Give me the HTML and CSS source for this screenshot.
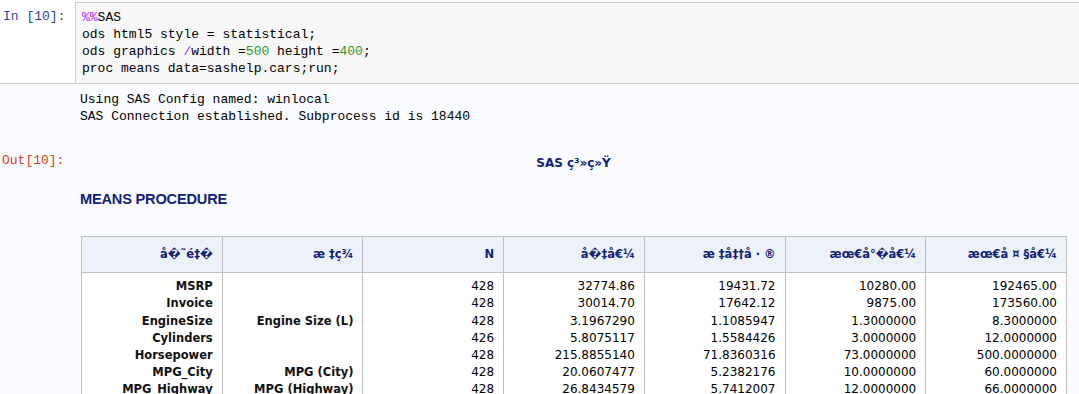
FILE: index.html
```html
<!DOCTYPE html>
<html lang="zh">
<head>
    <meta charset="UTF-8">
    <title>SAS notebook</title>
    <link rel="stylesheet" href="styles.css">
</head>
<body>
    <div class="cell-input">
        <div class="prompt in">In&nbsp;[10]:</div>
        <pre class="code"><span class="magic">%%</span>SAS
ods html5 style = statistical;
ods graphics <span class="op">/</span>width =<span class="num">500</span> height =<span class="num">400</span>;
proc means data=sashelp.cars;run;</pre>
    </div>

    <div class="cell-output">
        <div class="out-row">
            <div class="prompt"></div>
            <pre class="stream">Using SAS Config named: winlocal
SAS Connection established. Subprocess id is 18440</pre>
        </div>

        <div class="out-row result">
            <div class="prompt out">Out[10]:</div>
            <div class="sas">
                <p class="systitle">SAS ç³»ç»Ÿ</p>
                <p class="proctitle">MEANS PROCEDURE</p>
                <table class="means">
                    <thead>
                        <tr>
                            <th>å�˜é‡�</th>
                            <th>æ&nbsp;‡ç¾</th>
                            <th>N</th>
                            <th>å�‡å€¼</th>
                            <th>æ&nbsp;‡å‡†å&nbsp;·&nbsp;®</th>
                            <th>æœ€å°�å€¼</th>
                            <th>æœ€å&nbsp;¤&nbsp;§å€¼</th>
                        </tr>
                    </thead>
                    <tbody>
                        <tr>
                            <td class="rowhead">MSRP<br>Invoice<br>EngineSize<br>Cylinders<br>Horsepower<br>MPG_City<br>MPG_Highway<br>Weight<br>Wheelbase<br>Length</td>
                            <td class="rowhead"><br><br>Engine Size (L)<br><br><br>MPG (City)<br>MPG (Highway)<br>Weight (LBS)<br>Wheelbase (IN)<br>Length (IN)</td>
                            <td>428<br>428<br>428<br>426<br>428<br>428<br>428<br>428<br>428<br>428</td>
                            <td>32774.86<br>30014.70<br>3.1967290<br>5.8075117<br>215.8855140<br>20.0607477<br>26.8434579<br>3577.95<br>108.1542056<br>186.3621495</td>
                            <td>19431.72<br>17642.12<br>1.1085947<br>1.5584426<br>71.8360316<br>5.2382176<br>5.7412007<br>758.9832146<br>8.3118130<br>14.3579913</td>
                            <td>10280.00<br>9875.00<br>1.3000000<br>3.0000000<br>73.0000000<br>10.0000000<br>12.0000000<br>1850.00<br>89.0000000<br>143.0000000</td>
                            <td>192465.00<br>173560.00<br>8.3000000<br>12.0000000<br>500.0000000<br>60.0000000<br>66.0000000<br>7190.00<br>144.0000000<br>238.0000000</td>
                        </tr>
                    </tbody>
                </table>
            </div>
        </div>
    </div>
</body>
</html>
```

FILE: styles.css
```css
body {
    margin: 0;
    background-color: #ffffff;
    font-family: "Liberation Mono", monospace;
    font-size: 13px;
}
.cell-input {
    display: flex;
    padding-top: 2px;
    border-bottom: 1px solid #cfcfcf;
}
.prompt {
    flex: 0 0 auto;
    width: 75px;
    box-sizing: border-box;
    padding-left: 3px;
    line-height: 17px;
    font-family: "Liberation Mono", monospace;
    font-size: 13px;
}
.prompt.in {
    color: #303f9f;
    padding-top: 6px;
}
.prompt.out {
    color: #d84315;
    padding-left: 2px;
}
.code {
    flex: 1;
    margin: 0;
    padding: 6px 5px 6px 6px;
    line-height: 17px;
    font-family: "Liberation Mono", monospace;
    font-size: 13px;
    color: #000;
    background-color: #f7f7f7;
    border: 1px solid #cfcfcf;
    border-bottom: none;
    border-right: none;
}
.magic {
    color: #aa22ff;
}
.op {
    color: #aa22ff;
}
.num {
    color: #2a9a2a;
}
.cell-output {
    background-color: #fafbfe;
    overflow: hidden;
}
.out-row {
    display: flex;
}
.out-row .prompt {
    width: 80px;
}
.stream {
    margin: 0;
    padding-top: 7px;
    line-height: 17px;
    font-family: "Liberation Mono", monospace;
    font-size: 13px;
    color: #000;
}
.result {
    margin-top: 27px;
}
.sas {
    font-family: "DejaVu Sans", sans-serif;
    font-size: 12px;
    width: 987px;
}
.systitle {
    margin: 3px 0 0;
    line-height: 16px;
    text-align: center;
    font-weight: bold;
    color: #112277;
}
.proctitle {
    margin: 20px 0 0;
    line-height: 17px;
    font-family: "Liberation Sans", Arial, sans-serif;
    font-size: 14.6px;
    font-weight: bold;
    letter-spacing: -0.2px;
    color: #112277;
}
.means {
    margin-top: 28px;
    margin-left: 1px;
    border-collapse: collapse;
    table-layout: fixed;
    width: 986px;
    background-color: #ffffff;
}
.means th,
.means td {
    border: 1px solid #c1c1c1;
    text-align: right;
    line-height: 17.2px;
    white-space: nowrap;
}
.means th {
    padding: 9px 9px;
    background-color: #edf2f9;
    color: #112277;
    font-size: 11.5px;
    font-weight: bold;
}
.means td {
    padding: 5px 9px 5px 8px;
    vertical-align: top;
    color: #000;
}
.means td.rowhead {
    font-size: 11.5px;
    font-weight: bold;
    color: #111;
}
```
